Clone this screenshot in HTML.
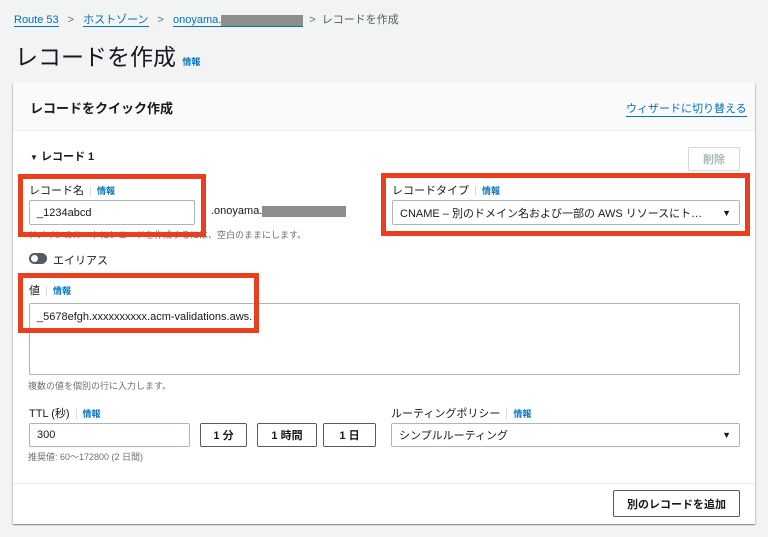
<!DOCTYPE html>
<html><head><meta charset="utf-8"><style>
*{box-sizing:border-box;margin:0;padding:0}
body{width:768px;height:537px;background:#f2f3f3;font-family:"Liberation Sans","Noto Sans CJK JP",sans-serif;color:#16191f;position:relative;overflow:hidden;font-size:11px}
.a{position:absolute;white-space:nowrap}
.link{color:#0073bb}
.info{color:#0073bb;font-size:9px;font-weight:bold;border-left:1px solid #d5dbdb;padding-left:6px;margin-left:6px}
.inp{position:absolute;background:#fff;border:1px solid #aab7b8;border-radius:2px;padding-left:7px;display:flex;align-items:center;font-size:11px;white-space:nowrap}
.btn{position:absolute;background:#fff;border:1px solid #545b64;border-radius:2px;display:flex;align-items:center;justify-content:center;font-size:11px;font-weight:bold;color:#545b64}
.red{position:absolute;border:5px solid #e8401f}
.gray{display:inline-block;background:#8d8d8d;height:11px;vertical-align:middle}
.help{font-size:9px;color:#687078}
.arr{position:absolute;right:8px;font-size:9px;color:#16191f;background:#fff}
.clip{display:inline-block;overflow:hidden;text-overflow:ellipsis;white-space:nowrap}
</style></head><body>
<div class="a" style="left:14px;top:11px;font-size:11px"><span class="link" style="border-bottom:1px solid #0073bb">Route 53</span><span style="color:#687078;margin:0 9px">&gt;</span><span class="link" style="border-bottom:1px solid #0073bb">ホストゾーン</span><span style="color:#687078;margin:0 9px">&gt;</span><span class="link" style="border-bottom:1px solid #0073bb">onoyama.<span class="gray" style="width:82px"></span></span><span style="color:#687078;margin:0 6px">&gt;</span><span style="color:#545b64">レコードを作成</span></div>
<div class="a" style="left:15px;top:38px;font-size:23px;color:#16191f">レコードを作成 <span class="link" style="font-size:9px;font-weight:bold">情報</span></div>

<div class="a" style="left:13px;top:83px;width:742px;height:441px;background:#fff;box-shadow:0 1px 1px rgba(0,28,36,.3),1px 1px 1px rgba(0,28,36,.15),-1px 1px 1px rgba(0,28,36,.15)"></div>
<div class="a" style="left:13px;top:83px;width:742px;height:48px;background:#fafafa;border-bottom:1px solid #eaeded"></div>
<div class="a" style="left:30px;top:98px;font-size:13px;font-weight:bold">レコードをクイック作成</div>
<div class="a link" style="left:626px;top:100px;font-size:11px;border-bottom:1px solid #0073bb">ウィザードに切り替える</div>

<div class="a" style="left:30px;top:148px;font-size:11px;font-weight:bold"><span style="font-size:8px">▼</span> レコード 1</div>
<div class="btn" style="left:688px;top:147px;width:52px;height:24px;border-color:#d5dbdb;color:#aab7b8">削除</div>

<div class="a" style="left:29px;top:182px;font-size:11px">レコード名<span class="info">情報</span></div>
<div class="inp" style="left:29px;top:200px;width:166px;height:25px">_1234abcd</div>
<div class="a" style="left:211px;top:205px;font-size:11px">.onoyama.<span class="gray" style="width:84px"></span></div>
<div class="a help" style="left:28px;top:228px">ドメインのルートにレコードを作成するには、空白のままにします。</div>
<div class="red" style="left:18px;top:174px;width:188px;height:63px"></div>

<div class="a" style="left:392px;top:182px;font-size:11px">レコードタイプ<span class="info">情報</span></div>
<div class="inp" style="left:392px;top:200px;width:348px;height:25px"><span class="clip" style="width:310px">CNAME – 別のドメイン名および一部の AWS リソースにトラフィックをルーティング</span><span class="arr">▼</span></div>
<div class="red" style="left:381px;top:173px;width:369px;height:63px"></div>

<div class="a" style="left:29px;top:253px;width:18px;height:11px;border-radius:6px;background:#545b64"></div>
<div class="a" style="left:31px;top:255px;width:7px;height:7px;border-radius:50%;background:#fff"></div>
<div class="a" style="left:53px;top:252px;font-size:11px">エイリアス</div>

<div class="a" style="left:29px;top:282px;font-size:11px">値<span class="info">情報</span></div>
<div class="inp" style="left:29px;top:303px;width:711px;height:72px;align-items:flex-start;padding-top:7px">_5678efgh.xxxxxxxxxx.acm-validations.aws.</div>
<div class="red" style="left:18px;top:273px;width:241px;height:60px"></div>
<div class="a help" style="left:28px;top:379px">複数の値を個別の行に入力します。</div>

<div class="a" style="left:29px;top:405px;font-size:11px">TTL (秒)<span class="info">情報</span></div>
<div class="inp" style="left:29px;top:423px;width:161px;height:24px">300</div>
<div class="btn" style="left:200px;top:423px;width:47px;height:24px;color:#16191f">1 分</div>
<div class="btn" style="left:257px;top:423px;width:60px;height:24px;color:#16191f">1 時間</div>
<div class="btn" style="left:323px;top:423px;width:53px;height:24px;color:#16191f">1 日</div>
<div class="a help" style="left:28px;top:450px">推奨値: 60～172800 (2 日間)</div>

<div class="a" style="left:391px;top:405px;font-size:11px">ルーティングポリシー<span class="info">情報</span></div>
<div class="inp" style="left:391px;top:423px;width:349px;height:24px">シンプルルーティング<span class="arr">▼</span></div>

<div class="a" style="left:13px;top:483px;width:742px;height:1px;background:#eaeded"></div>
<div class="btn" style="left:613px;top:490px;width:127px;height:27px;color:#16191f">別のレコードを追加</div>
</body></html>
